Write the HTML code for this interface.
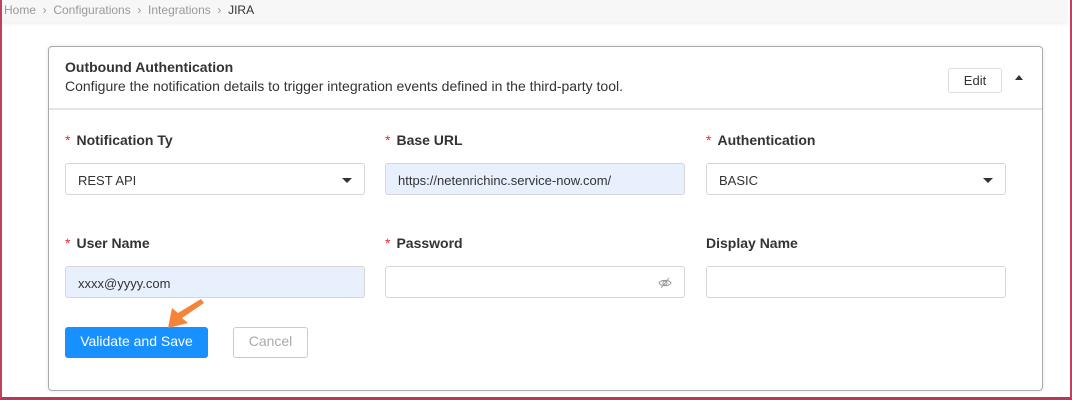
<!DOCTYPE html>
<html><head><style>
*{box-sizing:border-box;margin:0;padding:0}
body{width:1072px;height:400px;overflow:hidden;background:#fff;font-family:"Liberation Sans",Arial,sans-serif;position:relative}
.frame{position:absolute;left:0;top:0;width:1072px;height:400px;border:2px solid #c0415f;border-top:none;border-bottom:3px solid #b03a58}
.bc{position:absolute;left:0;top:0;width:1068px;height:22px;background:#f7f7f7;box-shadow:0 2px 3px rgba(0,0,0,.06);font-size:12px;color:#999;padding:3px 0 0 4px}
.bc b{color:#333;font-weight:normal}
.card{position:absolute;left:48px;top:46px;width:995px;height:345px;border:1px solid #aaa;border-radius:4px;box-shadow:0 0 4px rgba(0,0,0,.1)}
.hd{height:63px;border-bottom:2px solid #e4e4e4;padding:12px 0 0 16px}
.t{font-size:14px;font-weight:bold;color:#333}
.s{font-size:14px;color:#333;margin-top:3px}
.edit{position:absolute;left:899px;top:21px;width:54px;height:25px;border:1px solid #ddd;border-radius:3px;font-size:13px;color:#333;text-align:center;line-height:23px}
.caret{position:absolute;left:966px;top:28px;width:0;height:0;border-left:4px solid transparent;border-right:4px solid transparent;border-bottom:5px solid #333}
.lab{position:absolute;font-size:14px;font-weight:bold;color:#333}
.lab i{color:#e03030;font-style:normal;font-weight:normal;margin-right:6px}
.in{position:absolute;width:300px;height:32px;border:1px solid #d6d6d6;border-radius:3px;font-size:13px;color:#333;padding:0 12px;line-height:33px}
.blue{background:#e8f0fe}
.dd{position:absolute;right:12px;top:14px;border-left:5px solid transparent;border-right:5px solid transparent;border-top:5px solid #333}
.btn{position:absolute;left:65px;top:327px;width:143px;height:31px;background:#1890ff;border-radius:3px;color:#fff;font-size:14px;text-align:center;line-height:29px}
.cn{position:absolute;left:233px;top:327px;width:75px;height:31px;border:1px solid #ccc;border-radius:3px;color:#aaa;font-size:14px;text-align:center;line-height:27px}
</style></head><body>
<div class="bc">Home &nbsp;›&nbsp; Configurations &nbsp;›&nbsp; Integrations &nbsp;›&nbsp; <b>JIRA</b></div>
<div class="card"><div class="hd"><div class="t">Outbound Authentication</div><div class="s">Configure the notification details to trigger integration events defined in the third-party tool.</div></div>
<div class="edit">Edit</div><div class="caret"></div></div>
<div class="lab" style="left:65px;top:132px;width:108px;overflow:hidden;white-space:nowrap"><i>*</i>Notification Type</div>
<div class="lab" style="left:385px;top:132px"><i>*</i>Base URL</div>
<div class="lab" style="left:706px;top:132px"><i>*</i>Authentication</div>
<div class="in" style="left:65px;top:163px">REST API<span class="dd"></span></div>
<div class="in blue" style="left:385px;top:163px">https://netenrichinc.service-now.com/</div>
<div class="in" style="left:706px;top:163px">BASIC<span class="dd"></span></div>
<div class="lab" style="left:65px;top:235px"><i>*</i>User Name</div>
<div class="lab" style="left:385px;top:235px"><i>*</i>Password</div>
<div class="lab" style="left:706px;top:235px">Display Name</div>
<div class="in blue" style="left:65px;top:266px">xxxx@yyyy.com</div>
<div class="in" style="left:385px;top:266px"><svg style="position:absolute;right:12px;top:10px" width="14" height="12" viewBox="0 0 14 12"><path d="M1 6C3 2.5 11 2.5 13 6C11 9.5 3 9.5 1 6Z" fill="none" stroke="#999" stroke-width="1"/><circle cx="7" cy="6" r="2" fill="none" stroke="#999"/><path d="M3 11L11 1" stroke="#999"/></svg></div>
<div class="in" style="left:706px;top:266px"></div>
<div class="btn">Validate and Save</div>
<div class="cn">Cancel</div>
<svg style="position:absolute;left:160px;top:296px" width="50" height="36"><path d="M8 32L12 12L18 17L41 3L44 7L22 22L28 27Z" fill="#f5843a"/></svg>
<div class="frame"></div>
</body></html>
